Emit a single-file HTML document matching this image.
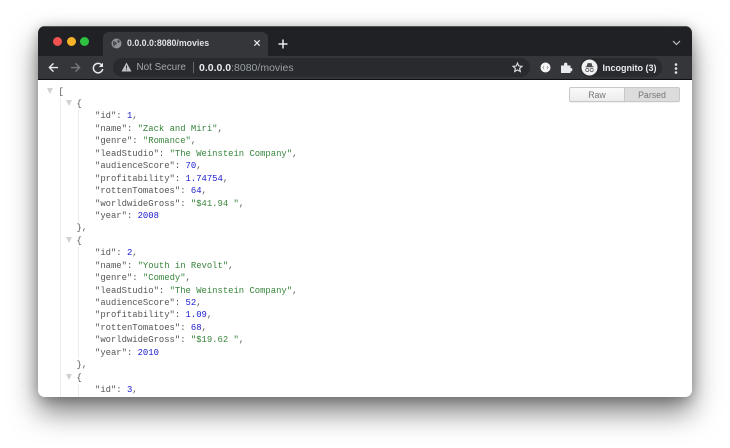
<!DOCTYPE html>
<html><head><meta charset="utf-8">
<style>
html,body{margin:0;padding:0;width:730px;height:448px;overflow:hidden;background:#fff}
#win{position:absolute;left:38px;top:26px;width:654px;height:371px;border-radius:7px;overflow:hidden;background:#fff;box-shadow:0 15px 28px rgba(0,0,0,.5),0 2px 12px rgba(0,0,0,.25)}
#strip{position:absolute;left:0;top:0;width:654px;height:30px;background:#202124;border-top:1px solid #55565a;box-sizing:border-box}
#bar{position:absolute;left:0;top:30px;width:654px;height:24px;background:#35363a;border-bottom:1px solid #111;box-sizing:border-box}
#tab{position:absolute;left:65px;top:6px;width:165px;height:24px;background:#35363a;border-radius:6px 6px 0 0}
.d{position:absolute;width:9px;height:9px;border-radius:50%;top:10.5px}
.t{position:absolute;font-family:"Liberation Sans",sans-serif;white-space:nowrap;filter:blur(.25px)}
#omni{position:absolute;left:75px;top:32px;width:417px;height:19px;border-radius:10px;background:#292a2d}
#inc{position:absolute;left:542px;top:32px;width:82px;height:19px;border-radius:10px;background:#292a2d}
svg{position:absolute;overflow:visible;filter:blur(.2px)}
#content{position:absolute;left:0;top:54px;width:654px;height:317px;background:#fff;overflow:hidden}
.l{position:absolute;font:8.9px/12px "Liberation Mono",monospace;white-space:pre;color:#555;filter:blur(.35px)}
.s{color:#38853c}.n{color:#1a1acc}
.g{position:absolute;width:1px;background:#ececec}
.a{position:absolute;width:0;height:0;border-left:3.5px solid transparent;border-right:3.5px solid transparent;border-top:6px solid #d2d2d2}
.b{position:absolute;top:7px;height:15px;box-sizing:border-box;font:8.8px/14px "Liberation Sans",sans-serif;text-align:center;color:#777;border:1px solid #c8c8c8;box-shadow:0 1px 1px rgba(0,0,0,.06)}
</style></head><body>
<div id="win">
<div id="strip"></div>
<div id="bar"></div>
<div id="tab"></div>
<div class="d" style="left:14.800px;background:#f0524f"></div>
<div class="d" style="left:28.500px;background:#f5b428"></div>
<div class="d" style="left:42.200px;background:#2ec13f"></div>
<svg style="left:73px;top:12px" width="11" height="11" viewBox="0 0 11 11"><circle cx="5.500" cy="5.500" r="5" fill="#8f9196"/><path d="M2 3l3 1 1 2-2 1-1 2-1-3zM7 1.500l2 1.500-1 2-2-1z" fill="#4a4b50"/></svg>
<div class="t" style="left:89px;top:12px;font-size:8.800px;line-height:11px;font-weight:bold;color:#dfe1e5">0.0.0.0:8080/movies</div>
<svg style="left:215px;top:13px" width="8" height="8" viewBox="0 0 9 9"><path d="M1.500 1.500l6 6M7.500 1.500l-6 6" stroke="#e8eaed" stroke-width="1.400"/></svg>
<svg style="left:240px;top:12.500px" width="10" height="10" viewBox="0 0 10 10"><path d="M5 .5v9M.5 5h9" stroke="#e8eaed" stroke-width="1.500"/></svg>
<svg style="left:634px;top:14px" width="9" height="6" viewBox="0 0 9 6"><path d="M1 1l3.500 3.500L8 1" fill="none" stroke="#bdc1c6" stroke-width="1.200"/></svg>

<svg style="left:10px;top:36px" width="11" height="11" viewBox="0 0 12 12"><path d="M11 6H2M6 1.500L1.500 6 6 10.500" fill="none" stroke="#e8eaed" stroke-width="1.500"/></svg>
<svg style="left:32px;top:36px" width="11" height="11" viewBox="0 0 12 12"><path d="M1 6h9M6 1.500L10.500 6 6 10.500" fill="none" stroke="#77787c" stroke-width="1.500"/></svg>
<svg style="left:54px;top:36px" width="12" height="12" viewBox="0 0 12 12"><path d="M10 3.500A4.700 4.700 0 1 0 10.700 7" fill="none" stroke="#e8eaed" stroke-width="1.500"/><path d="M11 .8v4.200H6.800z" fill="#e8eaed"/></svg>
<div id="omni"></div>
<svg style="left:83px;top:36px" width="11" height="10" viewBox="0 0 11 10"><path d="M5.500 .5L10.500 9.500H.5z" fill="#c0c2c6"/><path d="M5.500 3.500v3M5.500 7.300v1" stroke="#35363a" stroke-width="1"/></svg>
<div class="t" style="left:98.500px;top:35.500px;font-size:9.900px;line-height:12px;color:#a3a6ab">Not Secure</div>
<div style="position:absolute;left:154.500px;top:36px;width:1px;height:11px;background:#66676b"></div>
<div class="t" style="left:161px;top:35.500px;font-size:10.500px;line-height:12px;color:#9aa0a6"><span style="color:#e8eaed;font-weight:bold">0.0.0.0</span>:8080/movies</div>
<svg style="left:474px;top:36px" width="11" height="11" viewBox="0 0 11 11"><path d="M5.500 1l1.300 3 3.200.3-2.400 2.100.7 3.100-2.800-1.600-2.800 1.600.7-3.100L1 4.300 4.200 4z" fill="none" stroke="#dfe1e5" stroke-width="1.100"/></svg>
<svg style="left:502px;top:36px" width="11" height="11" viewBox="0 0 11 11"><circle cx="5.500" cy="5.500" r="5" fill="#f5f5f5"/><path d="M4 4L2.800 5.500 4 7M7 4l1.200 1.500L7 7" fill="none" stroke="#8a8b8e" stroke-width=".7"/></svg>
<svg style="left:523px;top:36px" width="11" height="11" viewBox="0 0 11 11"><path d="M0 3.500h3V2.300a1.700 1.700 0 0 1 3.400 0V3.500H9.500V6h.2a1.700 1.700 0 0 1 0 3.400h-.2V11H0z" fill="#e8eaed"/></svg>
<div id="inc"></div>
<svg style="left:543px;top:33px" width="17" height="17" viewBox="0 0 17 17"><circle cx="8.500" cy="8.500" r="8" fill="#f1f1f1"/><path d="M4.500 7.800h8M6 7.500l.8-3h3.400l.8 3z" fill="#4a4b4e" stroke="#4a4b4e" stroke-width=".8"/><circle cx="6.300" cy="11" r="1.600" fill="none" stroke="#5a5b5e" stroke-width=".7"/><circle cx="10.700" cy="11" r="1.600" fill="none" stroke="#5a5b5e" stroke-width=".7"/></svg>
<div class="t" style="left:564.500px;top:35.500px;font-size:9px;line-height:12px;font-weight:bold;color:#e8eaed">Incognito (3)</div>
<svg style="left:636px;top:36.500px" width="4" height="11" viewBox="0 0 4 11"><circle cx="2" cy="1.500" r="1.300" fill="#e8eaed"/><circle cx="2" cy="5.500" r="1.300" fill="#e8eaed"/><circle cx="2" cy="9.500" r="1.300" fill="#e8eaed"/></svg>

<div id="content">
<div class="b" style="left:531px;width:56px;background:linear-gradient(#fafafa,#ececec);border-radius:2px 0 0 2px">Raw</div>
<div class="b" style="left:586px;width:56px;background:#dcdcdc;border-radius:0 2px 2px 0">Parsed</div>
<div class="a" style="left:9px;top:8px"></div>
<div class="a" style="left:28px;top:20px"></div>
<div class="a" style="left:28px;top:157px"></div>
<div class="a" style="left:28px;top:294px"></div>
<div class="g" style="left:21.500px;top:18px;height:299px"></div>
<div class="g" style="left:40px;top:30px;height:112px"></div>
<div class="g" style="left:40px;top:167px;height:112px"></div>
<div class="g" style="left:40px;top:304px;height:13px"></div>
<div class="l" style="left:20.500px;top:5.500px">[</div>
<div class="l" style="left:38.500px;top:18px">{</div>
<div class="l" style="left:57px;top:30.400px">"id": <span class="n">1</span>,</div>
<div class="l" style="left:57px;top:42.800px">"name": <span class="s">"Zack and Miri"</span>,</div>
<div class="l" style="left:57px;top:55.300px">"genre": <span class="s">"Romance"</span>,</div>
<div class="l" style="left:57px;top:67.700px">"leadStudio": <span class="s">"The Weinstein Company"</span>,</div>
<div class="l" style="left:57px;top:80.200px">"audienceScore": <span class="n">70</span>,</div>
<div class="l" style="left:57px;top:92.600px">"profitability": <span class="n">1.74754</span>,</div>
<div class="l" style="left:57px;top:105px">"rottenTomatoes": <span class="n">64</span>,</div>
<div class="l" style="left:57px;top:117.500px">"worldwideGross": <span class="s">"$41.94 "</span>,</div>
<div class="l" style="left:57px;top:129.900px">"year": <span class="n">2008</span></div>
<div class="l" style="left:38.500px;top:142.300px">},</div>
<div class="l" style="left:38.500px;top:154.800px">{</div>
<div class="l" style="left:57px;top:167.200px">"id": <span class="n">2</span>,</div>
<div class="l" style="left:57px;top:179.600px">"name": <span class="s">"Youth in Revolt"</span>,</div>
<div class="l" style="left:57px;top:192.100px">"genre": <span class="s">"Comedy"</span>,</div>
<div class="l" style="left:57px;top:204.500px">"leadStudio": <span class="s">"The Weinstein Company"</span>,</div>
<div class="l" style="left:57px;top:217px">"audienceScore": <span class="n">52</span>,</div>
<div class="l" style="left:57px;top:229.400px">"profitability": <span class="n">1.09</span>,</div>
<div class="l" style="left:57px;top:241.800px">"rottenTomatoes": <span class="n">68</span>,</div>
<div class="l" style="left:57px;top:254.300px">"worldwideGross": <span class="s">"$19.62 "</span>,</div>
<div class="l" style="left:57px;top:266.700px">"year": <span class="n">2010</span></div>
<div class="l" style="left:38.500px;top:279.100px">},</div>
<div class="l" style="left:38.500px;top:291.600px">{</div>
<div class="l" style="left:57px;top:304px">"id": <span class="n">3</span>,</div>
</div>
</div>
</body></html>
